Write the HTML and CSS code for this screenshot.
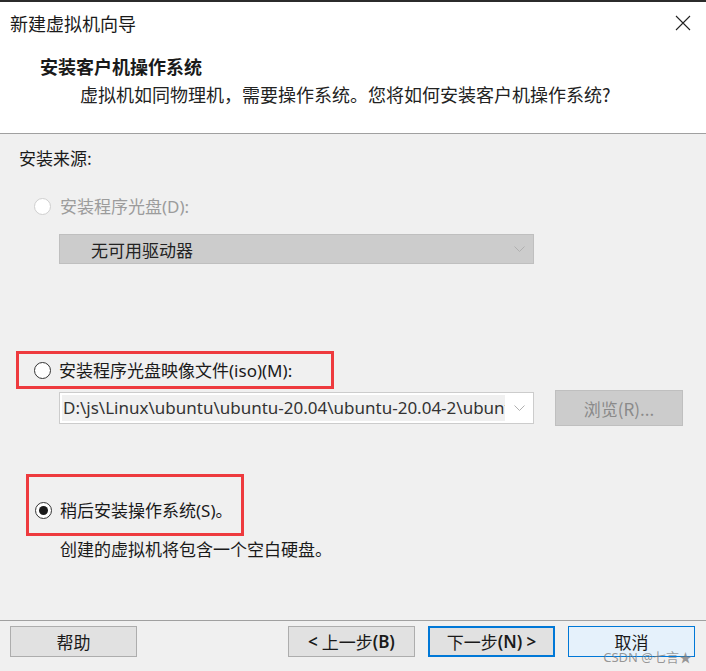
FILE: index.html
```html
<!DOCTYPE html>
<html lang="zh-CN">
<head>
<meta charset="utf-8">
<title>新建虚拟机向导</title>
<link rel="stylesheet" href="styles.css">
</head>
<body>
<div class="dialog">
  <div class="top">
    <div class="titlebar">
      <span class="title">新建虚拟机向导</span>
      <svg class="close" width="16" height="16" viewBox="0 0 16 16"><path d="M1 1L15 15M15 1L1 15" stroke="#222" stroke-width="1.1" fill="none"/></svg>
    </div>
    <div class="header">
      <div class="h-title">安装客户机操作系统</div>
      <div class="h-sub">虚拟机如同物理机，需要操作系统。您将如何安装客户机操作系统?</div>
    </div>
  </div>
  <div class="content">
    <div class="src-label">安装来源:</div>
    <div class="opt opt-disc">
      <span class="radio disabled"></span>
      <span class="opt-text disabled-text">安装程序光盘<span class="lat">(D):</span></span>
    </div>
    <div class="select disabled-select">
      <span class="select-text">无可用驱动器</span>
      <svg class="chev" width="11" height="7" viewBox="0 0 11 7"><path d="M0.5 0.5L5.5 5.5L10.5 0.5" stroke="#b0b0b0" fill="none"/></svg>
    </div>
    <div class="mark mark-iso">
      <div class="opt">
        <span class="radio"></span>
        <span class="opt-text">安装程序光盘映像文件<span class="lat">(iso)(M):</span></span>
      </div>
    </div>
    <div class="iso-row">
      <div class="select combo">
        <span class="combo-text">D:\js\Linux\ubuntu\ubuntu-20.04\ubuntu-20.04-2\ubuntu-20.04.2.0-desktop-amd64.iso</span>
        <svg class="chev" width="11" height="7" viewBox="0 0 11 7"><path d="M0.5 0.5L5.5 5.5L10.5 0.5" stroke="#b0b0b0" fill="none"/></svg>
      </div>
      <div class="btn-browse"><span>浏览(R)...</span></div>
    </div>
    <div class="mark mark-later">
      <div class="opt">
        <span class="radio checked"></span>
        <span class="opt-text">稍后安装操作系统<span class="lat">(S)</span>。</span>
      </div>
    </div>
    <div class="note">创建的虚拟机将包含一个空白硬盘。</div>
  </div>
  <div class="footer">
    <div class="btn">帮助</div>
    <div class="spacer"></div>
    <div class="btn"><span class="lat b">&lt;</span> 上一步<span class="lat b">(B)</span></div>
    <div class="btn primary">下一步<span class="lat b">(N) &gt;</span></div>
    <div class="btn hover">取消</div>
  </div>
  <div class="watermark">CSDN @七言★</div>
</div>
</body>
</html>
```
FILE: styles.css
```css
* { box-sizing: border-box; }
html, body { margin: 0; padding: 0; }
body {
  width: 706px;
  height: 671px;
  overflow: hidden;
  background: #f0f0f0;
  font-family: "Noto Sans CJK SC", "Noto Sans", sans-serif;
  color: #1a1a1a;
}
.lat { font-family: "Noto Sans", "Noto Sans CJK SC", sans-serif; }
.b { font-weight: 600; }
.dialog {
  position: relative;
  width: 706px;
  height: 671px;
  display: flex;
  flex-direction: column;
}
.top {
  background: #fff;
  border-top: 2px solid #2b2b2b;
  border-bottom: 1px solid #a0a0a0;
  height: 134px;
}
.titlebar {
  height: 42px;
  display: flex;
  align-items: center;
  justify-content: space-between;
  padding: 0 15px 0 10px;
}
.title { font-size: 18px; line-height: 24px; }
.close { display: block; }
.header { padding-left: 40px; }
.h-title {
  font-size: 18px;
  font-weight: 700;
  line-height: 24px;
  margin-top: 10px;
}
.h-sub {
  font-size: 18px;
  line-height: 24px;
  margin-top: 4px;
  padding-left: 40px;
  color: #222;
}
.content {
  height: 487px;
  font-size: 17px;
  border-bottom: 1px solid #a0a0a0;
}
.src-label {
  margin: 12px 0 0 19px;
  line-height: 24px;
  height: 24px;
}
.opt {
  display: flex;
  align-items: center;
  height: 24px;
  line-height: 24px;
}
.opt-disc { margin: 24px 0 0 34px; }
.opt-text { margin-left: 9px; white-space: nowrap; }
.disabled-text { color: #9c9c9c; }
.radio {
  width: 17px;
  height: 17px;
  border-radius: 50%;
  border: 1.5px solid #333;
  background: #fff;
  flex: none;
  display: flex;
  align-items: center;
  justify-content: center;
}
.radio.disabled { border-color: #cfcfcf; }
.radio.checked::after {
  content: "";
  width: 9px;
  height: 9px;
  border-radius: 50%;
  background: #1a1a1a;
}
.select {
  position: relative;
  display: flex;
  align-items: center;
  width: 475px;
  border: 1px solid #bfbfbf;
}
.disabled-select {
  margin: 16px 0 0 59px;
  height: 30px;
  background: #cccccc;
}
.select-text { margin-left: 31px; color: #222; }
.chev { position: absolute; right: 8px; top: 50%; margin-top: -3px; }
.mark {
  border: 3px solid #ee3a3e;
}
.mark-iso {
  margin: 87px 0 0 16px;
  width: 318px;
  height: 38px;
  padding: 4px 0 0 15px;
}
.mark-iso .opt-text { margin-left: 8px; }
.iso-row {
  display: flex;
  align-items: center;
  margin: 1px 0 0 59px;
  height: 36px;
}
.combo {
  height: 32px;
  background: #fff;
  border-color: #cccccc;
  padding: 2px;
}
.combo-text {
  display: block;
  width: 443px;
  height: 26px;
  line-height: 26px;
  background: #f0f0f0;
  overflow: hidden;
  white-space: nowrap;
  font-family: "Noto Sans", sans-serif;
  font-size: 17px;
  color: #333;
  padding-left: 1px;
}
.btn-browse {
  margin-left: 21px;
  width: 128px;
  height: 36px;
  background: #cccccc;
  border: 1px solid #bfbfbf;
  color: #8a8a8a;
  display: flex;
  align-items: center;
  justify-content: center;
  font-size: 17px;
}
.mark-later {
  margin: 48px 0 0 26px;
  width: 218px;
  height: 62px;
  padding: 21px 0 0 6px;
}
.mark-later .opt-text { margin-left: 8px; }
.note {
  margin: 1px 0 0 60px;
  height: 24px;
  line-height: 24px;
}
.footer {
  display: flex;
  align-items: flex-start;
  padding: 5px 11px 0 10px;
  gap: 13px;
}
.spacer { flex: 1; }
.btn {
  width: 127px;
  height: 31px;
  background: #e1e1e1;
  border: 1px solid #adadad;
  display: flex;
  align-items: center;
  justify-content: center;
  font-size: 17px;
  white-space: pre;
}
.btn.primary { border: 2px solid #0078d7; }
.btn.hover { background: #e5f1fb; border-color: #0078d7; }
.watermark {
  position: absolute;
  right: 14px;
  bottom: 6px;
  font-family: "Noto Sans", "Noto Sans CJK SC", sans-serif;
  font-size: 13px;
  line-height: 16px;
  color: rgba(120, 120, 120, 0.75);
}
```
